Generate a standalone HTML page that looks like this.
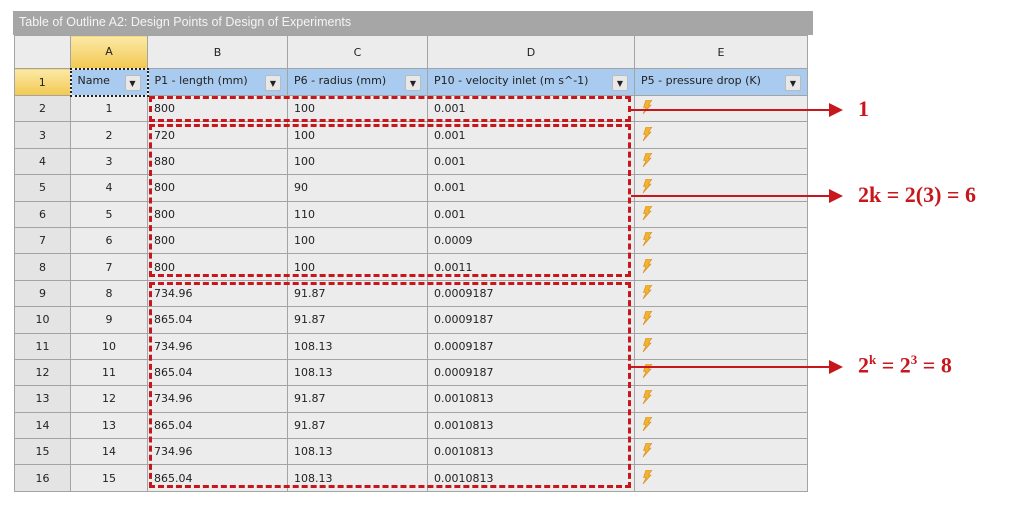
<!DOCTYPE html>
<html><head><style>
*{margin:0;padding:0;box-sizing:border-box}
body{width:1024px;height:507px;background:#fff;position:relative;overflow:hidden;font-family:"DejaVu Sans","Liberation Sans",sans-serif;font-size:11px;color:#222}
.title{position:absolute;left:13px;top:11px;width:800px;height:24px;background:#a6a6a6;color:#f4f4f4;font-size:12.5px;line-height:22px;padding-left:6px;font-family:"Liberation Sans",sans-serif}
table{position:absolute;left:14px;top:35px;border-collapse:collapse;table-layout:fixed;background:#ececec}
td{border:1px solid #a4a4a4;height:26.4px;padding:0 6px;white-space:nowrap;overflow:hidden}
.h td{height:33px;text-align:center;background:#ececec}
.p td{background:#a9cbef;height:27px}
td.n{text-align:center;background:#e4e4e4}
td.c{text-align:center}
.y{background:linear-gradient(#fbe9a8,#f2c850)!important}
.dd{float:right;width:16px;height:16px;background:#e8e8e8;border:1px solid #bbb;border-radius:2px;font-size:8px;line-height:15px;text-align:center;margin-top:1px}
.box{position:absolute;border:3px dashed #c8161d}
.arr{position:absolute;height:2px;background:#c8161d}
.arr:after{content:"";position:absolute;right:-2px;top:-6px;border-left:14px solid #c8161d;border-top:7px solid transparent;border-bottom:7px solid transparent}
.lab{position:absolute;font-family:"Liberation Serif",serif;font-weight:bold;color:#c8161d;font-size:22px}
</style></head><body>
<svg width="0" height="0" style="position:absolute"><defs><symbol id="b" viewBox="0 0 12 14"><path d="M5 0h6L7.5 5H10L2 14l3-6.5H2.5z" fill="#f2b233" stroke="#d98a10" stroke-width=".6"/></symbol></defs></svg>
<div class="title">Table of Outline A2: Design Points of Design of Experiments</div>
<table>
<colgroup><col style="width:56px"><col style="width:77px"><col style="width:140px"><col style="width:140px"><col style="width:207px"><col style="width:173px"></colgroup>
<tr class="h"><td></td><td class="y">A</td><td>B</td><td>C</td><td>D</td><td>E</td></tr>
<tr class="p"><td class="n y">1</td><td style="border:2px dotted #222">Name <span class="dd">▼</span></td><td>P1 - length (mm) <span class="dd">▼</span></td><td>P6 - radius (mm) <span class="dd">▼</span></td><td>P10 - velocity inlet (m s^-1) <span class="dd">▼</span></td><td>P5 - pressure drop (K) <span class="dd">▼</span></td></tr>
<tr><td class="n">2</td><td class="c">1</td><td>800</td><td>100</td><td>0.001</td><td><svg width="12" height="14"><use href="#b"/></svg></td></tr>
<tr><td class="n">3</td><td class="c">2</td><td>720</td><td>100</td><td>0.001</td><td><svg width="12" height="14"><use href="#b"/></svg></td></tr>
<tr><td class="n">4</td><td class="c">3</td><td>880</td><td>100</td><td>0.001</td><td><svg width="12" height="14"><use href="#b"/></svg></td></tr>
<tr><td class="n">5</td><td class="c">4</td><td>800</td><td>90</td><td>0.001</td><td><svg width="12" height="14"><use href="#b"/></svg></td></tr>
<tr><td class="n">6</td><td class="c">5</td><td>800</td><td>110</td><td>0.001</td><td><svg width="12" height="14"><use href="#b"/></svg></td></tr>
<tr><td class="n">7</td><td class="c">6</td><td>800</td><td>100</td><td>0.0009</td><td><svg width="12" height="14"><use href="#b"/></svg></td></tr>
<tr><td class="n">8</td><td class="c">7</td><td>800</td><td>100</td><td>0.0011</td><td><svg width="12" height="14"><use href="#b"/></svg></td></tr>
<tr><td class="n">9</td><td class="c">8</td><td>734.96</td><td>91.87</td><td>0.0009187</td><td><svg width="12" height="14"><use href="#b"/></svg></td></tr>
<tr><td class="n">10</td><td class="c">9</td><td>865.04</td><td>91.87</td><td>0.0009187</td><td><svg width="12" height="14"><use href="#b"/></svg></td></tr>
<tr><td class="n">11</td><td class="c">10</td><td>734.96</td><td>108.13</td><td>0.0009187</td><td><svg width="12" height="14"><use href="#b"/></svg></td></tr>
<tr><td class="n">12</td><td class="c">11</td><td>865.04</td><td>108.13</td><td>0.0009187</td><td><svg width="12" height="14"><use href="#b"/></svg></td></tr>
<tr><td class="n">13</td><td class="c">12</td><td>734.96</td><td>91.87</td><td>0.0010813</td><td><svg width="12" height="14"><use href="#b"/></svg></td></tr>
<tr><td class="n">14</td><td class="c">13</td><td>865.04</td><td>91.87</td><td>0.0010813</td><td><svg width="12" height="14"><use href="#b"/></svg></td></tr>
<tr><td class="n">15</td><td class="c">14</td><td>734.96</td><td>108.13</td><td>0.0010813</td><td><svg width="12" height="14"><use href="#b"/></svg></td></tr>
<tr><td class="n">16</td><td class="c">15</td><td>865.04</td><td>108.13</td><td>0.0010813</td><td><svg width="12" height="14"><use href="#b"/></svg></td></tr>
</table>
<div class="box" style="left:149px;top:96px;width:482px;height:26px"></div>
<div class="box" style="left:149px;top:124px;width:482px;height:153px"></div>
<div class="box" style="left:149px;top:282px;width:482px;height:206px"></div>
<div class="arr" style="left:631px;top:109px;width:210px"></div>
<div class="arr" style="left:631px;top:195px;width:210px"></div>
<div class="arr" style="left:631px;top:366px;width:210px"></div>
<div class="lab" style="left:858px;top:96px">1</div>
<div class="lab" style="left:858px;top:182px">2k = 2(3) = 6</div>
<div class="lab" style="left:858px;top:352px">2<sup style="font-size:13px">k</sup> = 2<sup style="font-size:13px">3</sup> = 8</div>
</body></html>
